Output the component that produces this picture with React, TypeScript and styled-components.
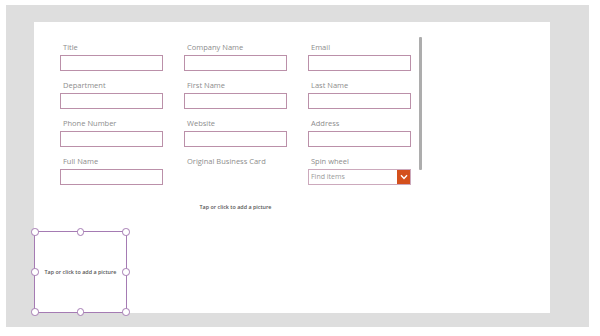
import React from "react";
import styled, { createGlobalStyle } from "styled-components";

const Global = createGlobalStyle`
  html, body { margin: 0; padding: 0; background: #ffffff; }
  body { font-family: "Open Sans", "Liberation Sans", sans-serif; }
`;

const Page = styled.div`
  width: 600px;
  height: 336px;
  box-sizing: border-box;
  padding: 5px 11px 9px 6px;
  background: #ffffff;
`;

const Stage = styled.div`
  height: 100%;
  box-sizing: border-box;
  background: #dedede;
  padding: 17px 39px 14px 28px;
`;

const Canvas = styled.div`
  position: relative;
  height: 100%;
  background: #ffffff;
`;

const FormArea = styled.div`
  display: flex;
  align-items: flex-start;
  gap: 8px;
  padding: 15px 0 0 26px;
`;

const Grid = styled.div`
  display: grid;
  grid-template-columns: repeat(3, 103px);
  column-gap: 21px;
  row-gap: 9px;
  padding-top: 5px;
`;

const Field = styled.div`
  display: flex;
  flex-direction: column;
`;

const Label = styled.div`
  height: 13px;
  font-size: 7.5px;
  line-height: 10px;
  color: #8d8d8d;
  padding-left: 3px;
  white-space: nowrap;
`;

const Input = styled.div`
  height: 16px;
  box-sizing: border-box;
  border: 1px solid #bb90a9;
  background: #ffffff;
`;

const Dropdown = styled.div`
  height: 16px;
  box-sizing: border-box;
  border: 1px solid #cca9bc;
  display: flex;
  align-items: stretch;
`;

const DropText = styled.div`
  flex: 1;
  font-size: 7px;
  line-height: 14px;
  color: #9a9a9a;
  padding-left: 2px;
`;

const DropButton = styled.div`
  width: 13px;
  background: #d4501c;
  display: flex;
  align-items: center;
  justify-content: center;
`;

const PicturePlaceholder = styled.div`
  height: 76px;
  display: flex;
  align-items: center;
  justify-content: center;
  font-size: 5.4px;
  font-weight: 600;
  color: #555555;
  white-space: nowrap;
`;

const Scrollbar = styled.div`
  width: 2.5px;
  height: 133px;
  background: #adadad;
  border-radius: 1px;
`;

const Selected = styled.div`
  position: absolute;
  left: 0;
  bottom: 0;
  width: 93px;
  height: 82px;
  box-sizing: border-box;
  border: 1.3px solid #a57bb3;
  display: flex;
  align-items: center;
  justify-content: center;
  font-size: 5.4px;
  font-weight: 600;
  color: #555555;
  white-space: nowrap;
`;

const Handle = styled.span<{ $x: number; $y: number }>`
  position: absolute;
  left: ${(p) => p.$x}%;
  top: ${(p) => p.$y}%;
  width: 5.5px;
  height: 5.5px;
  margin: -3.9px 0 0 -3.9px;
  border: 1.2px solid #a57bb3;
  border-radius: 50%;
  background: #ffffff;
`;

const fields: { label: string; kind: "input" | "picture" | "dropdown" }[] = [
  { label: "Title", kind: "input" },
  { label: "Company Name", kind: "input" },
  { label: "Email", kind: "input" },
  { label: "Department", kind: "input" },
  { label: "First Name", kind: "input" },
  { label: "Last Name", kind: "input" },
  { label: "Phone Number", kind: "input" },
  { label: "Website", kind: "input" },
  { label: "Address", kind: "input" },
  { label: "Full Name", kind: "input" },
  { label: "Original Business Card", kind: "picture" },
  { label: "Spin wheel", kind: "dropdown" },
];

const handles = [
  [0, 0], [50, 0], [100, 0],
  [0, 50], [100, 50],
  [0, 100], [50, 100], [100, 100],
];

export default function App() {
  return (
    <>
      <Global />
      <Page>
        <Stage>
          <Canvas>
            <FormArea>
              <Grid>
                {fields.map((f) => (
                  <Field key={f.label}>
                    <Label>{f.label}</Label>
                    {f.kind === "input" && <Input />}
                    {f.kind === "picture" && (
                      <PicturePlaceholder>Tap or click to add a picture</PicturePlaceholder>
                    )}
                    {f.kind === "dropdown" && (
                      <Dropdown>
                        <DropText>Find items</DropText>
                        <DropButton>
                          <svg width="8" height="6" viewBox="0 0 8 6">
                            <path d="M1 1.2 L4 4.4 L7 1.2" fill="none" stroke="#ffffff" strokeWidth="1.4" />
                          </svg>
                        </DropButton>
                      </Dropdown>
                    )}
                  </Field>
                ))}
              </Grid>
              <Scrollbar />
            </FormArea>
            <Selected>
              Tap or click to add a picture
              {handles.map(([x, y]) => (
                <Handle key={`${x}-${y}`} $x={x} $y={y} />
              ))}
            </Selected>
          </Canvas>
        </Stage>
      </Page>
    </>
  );
}
